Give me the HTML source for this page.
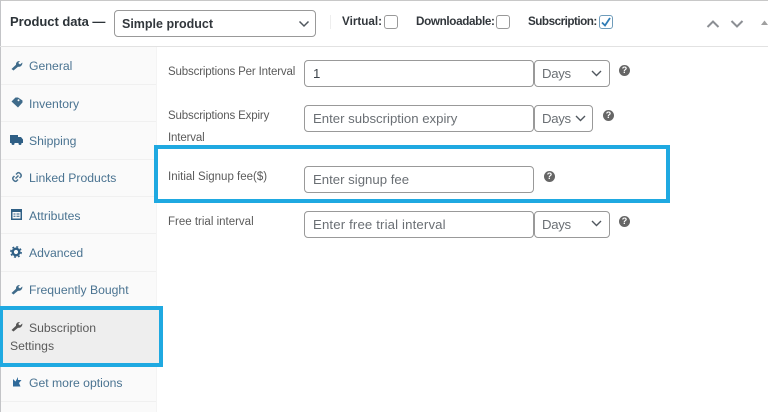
<!DOCTYPE html>
<html><head><meta charset="utf-8"><style>
html,body{margin:0;padding:0;background:#fff}
#p{position:relative;width:768px;height:412px;overflow:hidden;background:#fff;font-family:"Liberation Sans",sans-serif;filter:blur(.35px)}
#p div,#p svg{position:absolute}
.t{white-space:nowrap;line-height:16px;height:16px}
.b{font-weight:bold;font-size:11.7px;color:#32373c;letter-spacing:-.22px}
.n{font-size:12.2px;color:#4a7391}
.l{font-size:11.5px;color:#5a5a5a;letter-spacing:-.15px}
.i{box-sizing:border-box;height:27px;border:1px solid #999;border-radius:4px;background:#fff;font-size:13.2px;color:#6a6f74;line-height:26px;padding-left:8px;white-space:nowrap}
.d{padding-left:7px;letter-spacing:-.3px}
.h{width:11px;height:11px;border-radius:50%;background:#666;color:#fff;font-size:9px;font-weight:bold;line-height:11px;text-align:center}
.c{box-sizing:border-box;width:14px;height:14px;border:1px solid #999;border-radius:3px;background:#fff}
.s{left:1px;width:155px;height:1px;background:#f0f0f0}
</style></head><body><div id="p">
<div style="left:0;top:0;width:768px;height:1px;background:#c8c8c8"></div>
<div style="left:0;top:0;width:1px;height:412px;background:#c3c4c7"></div>
<div style="left:1px;top:47px;width:155px;height:365px;background:#fafafa"></div>
<div style="left:0;top:46px;width:768px;height:1px;background:#e2e2e2"></div>
<div style="left:156px;top:47px;width:1px;height:365px;background:#f4f4f4"></div>

<div class="t" style="left:10px;top:14px;font-size:13px;font-weight:bold;color:#2c3338;letter-spacing:-.05px">Product data —</div>
<div class="i" style="left:114px;top:10px;width:202px;height:27px;font-weight:bold;font-size:12.5px;color:#32373c;line-height:26px;padding-left:7px">Simple product</div>
<svg style="left:298px;top:20px" width="12" height="8"><path d="M1.500 1.500L6 6L10.500 1.500" fill="none" stroke="#50575e" stroke-width="1.500"/></svg>
<div style="left:330px;top:15px;width:1px;height:14px;background:#eee"></div>

<div class="t b" style="left:342px;top:14px;letter-spacing:0">Virtual:</div>
<div class="c" style="left:384px;top:15px"></div>
<div class="t b" style="left:416px;top:14px;letter-spacing:-.35px">Downloadable:</div>
<div class="c" style="left:496px;top:15px"></div>
<div class="t b" style="left:528px;top:14px;letter-spacing:-.5px">Subscription:</div>
<div class="c" style="left:599px;top:15px;border-color:#6f9cba"></div>
<svg style="left:599px;top:15px" width="14" height="14"><path d="M3 7.500L6 10.500L11 3" fill="none" stroke="#2f7cb5" stroke-width="1.800"/></svg>
<svg style="left:706px;top:19px" width="14" height="10"><path d="M1.500 8L7 2.500L12.500 8" fill="none" stroke="#8c8f94" stroke-width="2"/></svg>
<svg style="left:730px;top:19px" width="14" height="10"><path d="M1.500 2L7 7.500L12.500 2" fill="none" stroke="#8c8f94" stroke-width="2"/></svg>
<svg style="left:761px;top:20px" width="7" height="6"><path d="M0 5L3.500 0.500L7 5Z" fill="#a0a0a0"/></svg>

<div class="s" style="top:84px"></div><div class="s" style="top:121px"></div><div class="s" style="top:159px"></div><div class="s" style="top:196px"></div><div class="s" style="top:233px"></div><div class="s" style="top:271px"></div><div class="s" style="top:401px"></div>

<svg style="left:11px;top:60px" width="12" height="11" viewBox="0 0 12 11"><path d="M0.500 9L5 4.800C4.800 2.500 6.500 .8 9 1L7.200 3L9 4.500L11.300 2.500C11.800 5 9.500 7.300 7 6.800L2.500 10.500Z" fill="#3f6b8a"/></svg>
<div class="t n" style="left:29px;top:58px">General</div>
<svg style="left:11px;top:97px" width="12" height="11" viewBox="0 0 12 11"><path fill-rule="evenodd" d="M0.500 4.500L4.500 0.500H7L11.500 3.500V5.500L7 10.500ZM7.500 2.200A1 1 0 1 0 7.510 2.200Z" fill="#3f6b8a"/></svg>
<div class="t n" style="left:29px;top:96px">Inventory</div>
<svg style="left:10px;top:134px" width="13" height="11" viewBox="0 0 13 11"><path d="M0 1H8V3H11L13 5.500V9H0Z" fill="#2f5f85"/><circle cx="3" cy="9.500" r="1.500" fill="#2f5f85"/><circle cx="10" cy="9.500" r="1.500" fill="#2f5f85"/></svg>
<div class="t n" style="left:29px;top:133px">Shipping</div>
<svg style="left:11px;top:171px" width="12" height="12" viewBox="0 0 12 12"><path d="M4.500 7.500L7.500 4.500M5 3.500L6.500 2C8 .8 11 3.500 10 5.500L8.500 7M7 8.500L5.500 10C4 11.200 1 8.500 2 6.500L3.500 5" fill="none" stroke="#4a7391" stroke-width="1.500"/></svg>
<div class="t n" style="left:29px;top:170px">Linked Products</div>
<svg style="left:11px;top:209px" width="11" height="11" viewBox="0 0 11 11"><path fill-rule="evenodd" d="M0 0H11V11H0ZM1.500 3V9.500H9.500V3ZM2.500 4.500H4.500V5.500H2.500ZM5.500 4.500H8.500V5.500H5.500ZM2.500 6.800H4.500V7.800H2.500ZM5.500 6.800H8.500V7.800H5.500Z" fill="#2f5f85"/></svg>
<div class="t n" style="left:29px;top:208px">Attributes</div>
<svg style="left:10px;top:246px" width="12" height="12" viewBox="0 0 12 12"><circle cx="6" cy="6" r="3.300" fill="none" stroke="#2f5f85" stroke-width="2.400"/><circle cx="6" cy="6" r="5.200" fill="none" stroke="#2f5f85" stroke-width="1.400" stroke-dasharray="2 2.100"/></svg>
<div class="t n" style="left:29px;top:245px">Advanced</div>
<svg style="left:11px;top:284px" width="12" height="11" viewBox="0 0 12 11"><path d="M0.500 9L5 4.800C4.800 2.500 6.500 .8 9 1L7.200 3L9 4.500L11.300 2.500C11.800 5 9.500 7.300 7 6.800L2.500 10.500Z" fill="#3f6b8a"/></svg>
<div class="t n" style="left:29px;top:282px">Frequently Bought</div>

<div style="left:3px;top:310px;width:156px;height:53px;background:#eee"></div>
<svg style="left:11px;top:321px" width="12" height="11" viewBox="0 0 12 11"><path d="M0.500 9L5 4.800C4.800 2.500 6.500 .8 9 1L7.200 3L9 4.500L11.300 2.500C11.800 5 9.500 7.300 7 6.800L2.500 10.500Z" fill="#555"/></svg>
<div class="t n" style="left:29px;top:320px;color:#5a5a5a">Subscription</div>
<div class="t n" style="left:10px;top:338px;color:#5a5a5a">Settings</div>
<div style="box-sizing:border-box;left:-1px;top:306px;width:164px;height:61px;border:4px solid #1fa9e1"></div>

<svg style="left:11px;top:376px" width="12" height="12" viewBox="0 0 12 12"><path d="M2 3L4.500 5.500L7 1L7 4L10.500 4L8 7L9.500 10.500H2Z" fill="#2f6a9a"/></svg>
<div class="t n" style="left:29px;top:375px">Get more options</div>

<div class="t l" style="left:168px;top:64px">Subscriptions Per Interval</div>
<div class="i" style="left:304px;top:60px;width:230px;color:#3c434a">1</div>
<div class="i d" style="left:534px;top:60px;width:76px">Days</div>
<svg style="left:591px;top:70px" width="11" height="7"><path d="M1 1L5.500 5.500L10 1" fill="none" stroke="#50575e" stroke-width="1.400"/></svg>
<div class="h" style="left:619px;top:65px">?</div>

<div class="t l" style="left:168px;top:108px">Subscriptions Expiry</div>
<div class="t l" style="left:168px;top:130px">Interval</div>
<div class="i" style="left:304px;top:105px;width:230px">Enter subscription expiry</div>
<div class="i d" style="left:534px;top:105px;width:59px">Days</div>
<svg style="left:575px;top:115px" width="11" height="7"><path d="M1 1L5.500 5.500L10 1" fill="none" stroke="#50575e" stroke-width="1.400"/></svg>
<div class="h" style="left:603px;top:110px">?</div>

<div style="box-sizing:border-box;left:154px;top:145px;width:516px;height:58px;border:4px solid #1fa9e1"></div>
<div class="t l" style="left:168px;top:169px;letter-spacing:0">Initial Signup fee($)</div>
<div class="i" style="left:304px;top:166px;width:230px">Enter signup fee</div>
<div class="h" style="left:544px;top:171px">?</div>

<div class="t l" style="left:168px;top:214px;letter-spacing:0">Free trial interval</div>
<div class="i" style="left:304px;top:211px;width:230px;letter-spacing:.15px">Enter free trial interval</div>
<div class="i d" style="left:534px;top:211px;width:76px">Days</div>
<svg style="left:591px;top:220px" width="11" height="7"><path d="M1 1L5.500 5.500L10 1" fill="none" stroke="#50575e" stroke-width="1.400"/></svg>
<div class="h" style="left:619px;top:216px">?</div>
</div></body></html>
